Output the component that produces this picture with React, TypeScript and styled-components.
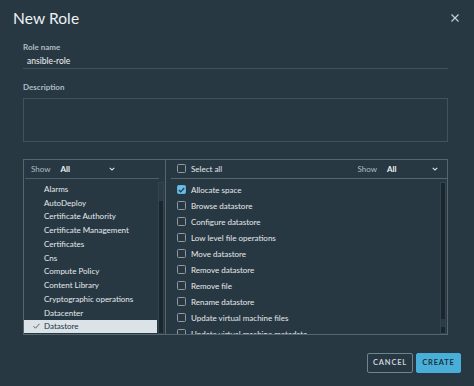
import styled, { createGlobalStyle } from "styled-components";

const GlobalStyle = createGlobalStyle`
  html, body {
    margin: 0;
    padding: 0;
    background: #283843;
  }
  body {
    font-family: Lato, "Noto Sans", sans-serif;
    color: #e4e9ec;
  }
`;

const Modal = styled.div`
  width: 474px;
  height: 386px;
  box-sizing: border-box;
  background: #283843;
  display: flex;
  flex-direction: column;
  overflow: hidden;
`;

const Header = styled.div`
  display: flex;
  justify-content: space-between;
  align-items: center;
  height: 22px;
  padding: 7px 14px 0 13px;
`;

const Title = styled.div`
  font-size: 15.5px;
  font-weight: 400;
  color: #eef1f3;
  letter-spacing: 0.1px;
`;

const Close = styled.button`
  background: none;
  border: none;
  padding: 0;
  width: 10px;
  height: 10px;
  display: flex;
  cursor: pointer;
`;

const Body = styled.div`
  padding: 13px 26px 0 23px;
  display: flex;
  flex-direction: column;
`;

const Label = styled.div`
  font-size: 8px;
  font-weight: 700;
  color: #aebbc4;
  height: 10px;
  line-height: 10px;
`;

const NameInput = styled.div`
  margin-top: 2px;
  padding-left: 4px;
  height: 14px;
  line-height: 14px;
  font-size: 8.5px;
  color: #eef1f3;
  border-bottom: 1.5px solid #40525e;
  margin-bottom: 12.5px;
`;

const TextArea = styled.div`
  margin-top: 6px;
  height: 42px;
  border: 1.5px solid #40525e;
  margin-bottom: 17px;
`;

const Panel = styled.div`
  height: 176px;
  box-sizing: border-box;
  border: 1.5px solid #56666f;
  display: flex;
  overflow: hidden;
`;

const LeftCol = styled.div`
  width: 141px;
  border-right: 1.5px solid #56666f;
  display: flex;
  flex-direction: column;
`;

const RightCol = styled.div`
  flex: 1;
  display: flex;
  flex-direction: column;
  min-width: 0;
`;

const LeftHead = styled.div`
  height: 18px;
  margin: 0 6px 0 1px;
  display: flex;
  align-items: center;
  border-bottom: 1.5px solid #4e5e69;
  font-size: 8px;
`;

const ShowLabel = styled.span<{ $gap: number }>`
  color: #aebbc4;
  margin-left: ${(p) => p.$gap}px;
`;

const Select = styled.span<{ $width: number }>`
  display: flex;
  align-items: center;
  justify-content: space-between;
  width: ${(p) => p.$width}px;
  margin-left: 10px;
  color: #eef1f3;
  font-weight: 700;
`;

const Chevron = () => (
  <svg width="6" height="4" viewBox="0 0 6 4">
    <path d="M0.7 0.8 L3 3 L5.3 0.8" stroke="#d8dfe4" strokeWidth="1.1" fill="none" />
  </svg>
);

const ListArea = styled.div`
  flex: 1;
  display: flex;
  padding-top: 3.5px;
  min-height: 0;
`;

const List = styled.div`
  flex: 1;
  display: flex;
  flex-direction: column;
  overflow: hidden;
`;

const Item = styled.div<{ $selected?: boolean }>`
  height: 13.75px;
  flex: none;
  display: flex;
  align-items: center;
  padding-left: 9px;
  font-size: 8px;
  color: ${(p) => (p.$selected ? "#22323c" : "#e4e9ec")};
  background: ${(p) => (p.$selected ? "#dce3e8" : "transparent")};
`;

const CheckSlot = styled.span`
  width: 11px;
  display: flex;
  align-items: center;
`;

const Scroll = styled.div<{ $thumbTop: boolean }>`
  width: 6px;
  margin: 0 1px 0 1px;
  background: #1b272f;
  border: 1px solid #33444f;
  box-sizing: border-box;
  display: flex;
  flex-direction: column;
  justify-content: ${(p) => (p.$thumbTop ? "flex-start" : "flex-end")};
`;

const Thumb = styled.div<{ $h: number }>`
  height: ${(p) => p.$h}px;
  background: #2c3b45;
  margin-bottom: 6px;
`;

const RightHead = styled.div`
  height: 18px;
  margin-left: 5px;
  display: flex;
  align-items: center;
  border-bottom: 1.5px solid #56666f;
  font-size: 8px;
  padding-left: 6px;
`;

const Box = styled.span<{ $checked?: boolean }>`
  width: 9px;
  height: 9px;
  box-sizing: border-box;
  border: 1px solid ${(p) => (p.$checked ? "#5bb3dc" : "#8d9aa3")};
  background: ${(p) => (p.$checked ? "#6cbde3" : "transparent")};
  border-radius: 1.5px;
  display: flex;
  align-items: center;
  justify-content: center;
  flex: none;
`;

const BoxText = styled.span`
  margin-left: 5px;
  color: #e4e9ec;
  white-space: nowrap;
`;

const Spacer = styled.span`
  flex: 1;
`;

const RightList = styled.div`
  flex: 1;
  display: flex;
  padding-top: 3px;
  min-height: 0;
`;

const PermList = styled.div`
  flex: 1;
  display: flex;
  flex-direction: column;
  overflow: hidden;
  padding-left: 11px;
`;

const Perm = styled.div`
  height: 16px;
  flex: none;
  display: flex;
  align-items: center;
  font-size: 8px;
`;

const Footer = styled.div`
  display: flex;
  justify-content: flex-end;
  gap: 3px;
  padding: 18px 13px 0 0;
`;

const Button = styled.button<{ $primary?: boolean }>`
  height: 20px;
  box-sizing: border-box;
  padding: 0;
  width: ${(p) => (p.$primary ? 45 : 46)}px;
  border-radius: 2px;
  font-family: Lato, "Noto Sans", sans-serif;
  font-size: 7.5px;
  font-weight: 700;
  letter-spacing: 0.8px;
  border: 1px solid ${(p) => (p.$primary ? "#49afd9" : "#6c8593")};
  background: ${(p) => (p.$primary ? "#49afd9" : "transparent")};
  color: ${(p) => (p.$primary ? "#1b2f3d" : "#c6d1d8")};
`;

const categories = [
  "Alarms",
  "AutoDeploy",
  "Certificate Authority",
  "Certificate Management",
  "Certificates",
  "Cns",
  "Compute Policy",
  "Content Library",
  "Cryptographic operations",
  "Datacenter",
  "Datastore",
];

const permissions = [
  "Allocate space",
  "Browse datastore",
  "Configure datastore",
  "Low level file operations",
  "Move datastore",
  "Remove datastore",
  "Remove file",
  "Rename datastore",
  "Update virtual machine files",
  "Update virtual machine metadata",
];

export default function App() {
  return (
    <Modal>
      <GlobalStyle />
      <Header>
        <Title>New Role</Title>
        <Close aria-label="Close">
          <svg width="10" height="10" viewBox="0 0 10 10">
            <path d="M1.5 1.5 L8.5 8.5 M8.5 1.5 L1.5 8.5" stroke="#c9d3da" strokeWidth="1.1" />
          </svg>
        </Close>
      </Header>
      <Body>
        <Label>Role name</Label>
        <NameInput>ansible-role</NameInput>
        <Label>Description</Label>
        <TextArea />
        <Panel>
          <LeftCol>
            <LeftHead>
              <ShowLabel $gap={6}>Show</ShowLabel>
              <Select $width={54}>
                All
                <Chevron />
              </Select>
            </LeftHead>
            <ListArea>
              <List>
                {categories.map((c) => (
                  <Item key={c} $selected={c === "Datastore"}>
                    <CheckSlot>
                      {c === "Datastore" && (
                        <svg width="7" height="6" viewBox="0 0 7 6">
                          <path d="M0.5 3.2 L2.5 5.2 L6.5 0.8" stroke="#44555f" strokeWidth="0.9" fill="none" />
                        </svg>
                      )}
                    </CheckSlot>
                    {c}
                  </Item>
                ))}
              </List>
              <Scroll $thumbTop>
                <Thumb $h={18} />
              </Scroll>
            </ListArea>
          </LeftCol>
          <RightCol>
            <RightHead>
              <Box />
              <BoxText>Select all</BoxText>
              <Spacer />
              <ShowLabel $gap={0}>Show</ShowLabel>
              <Select $width={51}>
                All
                <Chevron />
              </Select>
              <span style={{ width: 9 }} />
            </RightHead>
            <RightList>
              <PermList>
                {permissions.map((p, i) => (
                  <Perm key={p}>
                    <Box $checked={i === 0}>
                      {i === 0 && (
                        <svg width="7" height="6" viewBox="0 0 7 6">
                          <path d="M0.8 3 L2.7 4.8 L6.2 1" stroke="#1c3a52" strokeWidth="1.2" fill="none" />
                        </svg>
                      )}
                    </Box>
                    <BoxText>{p}</BoxText>
                  </Perm>
                ))}
              </PermList>
              <Scroll $thumbTop={false}>
                <Thumb $h={8} />
              </Scroll>
            </RightList>
          </RightCol>
        </Panel>
      </Body>
      <Footer>
        <Button>CANCEL</Button>
        <Button $primary>CREATE</Button>
      </Footer>
    </Modal>
  );
}
